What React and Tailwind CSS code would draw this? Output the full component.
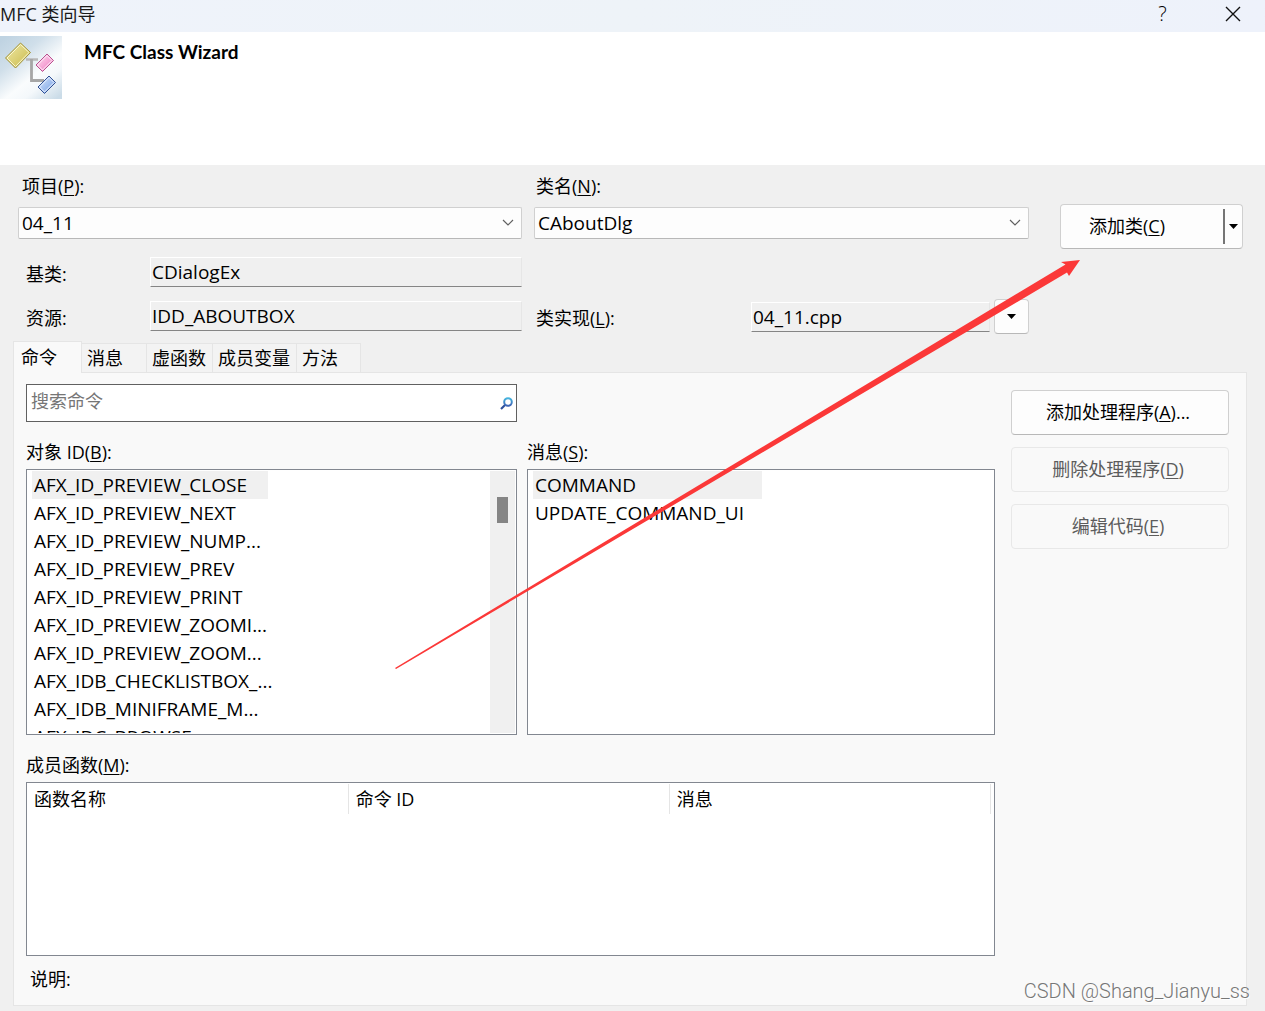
import { useState } from "react";

const tabs = [
  { name: "命令", width: "w-[69px]" },
  { name: "消息", width: "w-[65px]" },
  { name: "虚函数", width: "w-[66px]" },
  { name: "成员变量", width: "w-[84px]" },
  { name: "方法", width: "w-16" },
];

const objectIds = [
  "AFX_ID_PREVIEW_CLOSE",
  "AFX_ID_PREVIEW_NEXT",
  "AFX_ID_PREVIEW_NUMP...",
  "AFX_ID_PREVIEW_PREV",
  "AFX_ID_PREVIEW_PRINT",
  "AFX_ID_PREVIEW_ZOOMI...",
  "AFX_ID_PREVIEW_ZOOM...",
  "AFX_IDB_CHECKLISTBOX_...",
  "AFX_IDB_MINIFRAME_M...",
  "AFX_IDC_BROWSE",
];

const messages = ["COMMAND", "UPDATE_COMMAND_UI"];

const columns = ["函数名称", "命令 ID", "消息"];

function WizardIcon() {
  return (
    <svg width="62" height="63" viewBox="0 0 62 63" aria-hidden="true">
      <defs>
        <linearGradient id="bg" x1="0.1" y1="0" x2="0.9" y2="1">
          <stop offset="0" stopColor="#bfd3e2" />
          <stop offset="0.3" stopColor="#d0dfea" />
          <stop offset="0.6" stopColor="#fafcfd" />
          <stop offset="0.75" stopColor="#f4f8fb" />
          <stop offset="1" stopColor="#cbdce8" />
        </linearGradient>
        <linearGradient id="yellow" x1="0" y1="0" x2="1" y2="1">
          <stop offset="0" stopColor="#f0eaa8" />
          <stop offset="1" stopColor="#c8b848" />
        </linearGradient>
        <linearGradient id="pink" x1="0" y1="0" x2="1" y2="1">
          <stop offset="0" stopColor="#ffe3f4" />
          <stop offset="1" stopColor="#ee74bd" />
        </linearGradient>
        <linearGradient id="blue" x1="0" y1="0" x2="1" y2="1">
          <stop offset="0" stopColor="#dce9ff" />
          <stop offset="1" stopColor="#6f9be0" />
        </linearGradient>
      </defs>
      <rect width="62" height="63" fill="url(#bg)" />
      <path d="M26 23.500H38" fill="none" stroke="#b8b8b8" strokeWidth="2.500" />
      <path d="M31.500 23V44.500H44" fill="none" stroke="#a6a6a6" strokeWidth="2.800" />
      <path d="M20.500 7L30.500 16.500L15.500 32L5.500 22Z" fill="url(#yellow)" stroke="#a3943a" />
      <path d="M20.500 8.500L29 16.500L15.500 30.500L7 22Z" fill="none" stroke="#fbf8d2" />
      <path d="M47 18L53.500 24.500L42.500 35.500L36 29Z" fill="url(#pink)" stroke="#b8508f" />
      <path d="M47 19.500L52 24.500L42.500 34L37.500 29Z" fill="none" stroke="#fff0fa" />
      <path d="M49 40L55.500 46.500L44.500 57.500L38 51Z" fill="url(#blue)" stroke="#2f4f94" />
      <path d="M49 41.500L54 46.500L44.500 56L39.500 51Z" fill="none" stroke="#edf4ff" />
    </svg>
  );
}

function Chevron() {
  return (
    <svg
      className="absolute right-2 top-3 pointer-events-none"
      width="12"
      height="8"
      viewBox="0 0 12 8"
      aria-hidden="true"
    >
      <path d="M1 1L6 6L11 1" fill="none" stroke="#606060" strokeWidth="1.200" />
    </svg>
  );
}

function Caret() {
  return (
    <svg width="9" height="5" viewBox="0 0 9 5" aria-hidden="true">
      <path d="M0 0H9L4.500 5Z" fill="#000" />
    </svg>
  );
}

function SearchIcon() {
  return (
    <svg width="13" height="13" viewBox="0 0 13 13" aria-hidden="true">
      <defs>
        <linearGradient id="lens" x1="0" y1="0" x2="0" y2="1">
          <stop offset="0" stopColor="#45b4de" />
          <stop offset="1" stopColor="#3f63b5" />
        </linearGradient>
      </defs>
      <path d="M5 8L1 12" stroke="#2d4f9b" strokeWidth="2.200" />
      <circle cx="8" cy="5" r="3.800" fill="#fff" stroke="url(#lens)" strokeWidth="2" />
    </svg>
  );
}

function Key({ children }) {
  return <u className="underline-offset-2 decoration-1">{children}</u>;
}

function Combo({ id, value }) {
  return (
    <div className="relative mt-[9px]">
      <select
        id={id}
        defaultValue={value}
        className="block appearance-none w-full h-8 px-[3px] text-[19px] leading-[30px] bg-[#fdfdfd] border border-[#d0d0d0] border-b-[#b8b8b8] rounded-xs"
      >
        <option>{value}</option>
      </select>
      <Chevron />
    </div>
  );
}

function Field({ id, value }) {
  return (
    <input
      id={id}
      readOnly
      value={value}
      className="flex-1 min-w-0 h-[30px] px-px text-[19px] bg-[#f0f0f0] border border-t-white border-r-[#e6e6e6] border-l-white border-b-[#858585] outline-none"
    />
  );
}

function ListItem({ text, active, width, onClick }) {
  return (
    <li
      role="option"
      aria-selected={active}
      onClick={onClick}
      className={`${width} ml-1 pl-[2px] h-7 text-[19px] leading-7 whitespace-nowrap ${active ? "bg-[#f0f0f0]" : ""}`}
    >
      {text}
    </li>
  );
}

function ActionButton({ children, disabled }) {
  return (
    <button
      disabled={disabled}
      className="h-[45px] pr-1 pb-px rounded border bg-[#fdfdfd] border-[#d0d0d0] border-b-[#b8b8b8] disabled:bg-[#f9f9f9] disabled:border-[#e8e8e8] disabled:text-[#5c5c5c]"
    >
      {children}
    </button>
  );
}

export default function App() {
  const [tab, setTab] = useState("命令");
  const [objectId, setObjectId] = useState(objectIds[0]);
  const [message, setMessage] = useState(messages[0]);

  return (
    <div className="relative min-h-screen overflow-hidden bg-[#f0f0f0] text-black text-lg leading-6 font-['Open_Sans','Noto_Sans_CJK_SC',sans-serif]">
      {/* Title bar */}
      <header className="h-8 flex items-center justify-between bg-linear-to-r from-[#eff3fb] via-[#eef3f8] to-[#eef2fb]">
        <span className="pb-1 text-[#1a1a1a]">MFC 类向导</span>
        <div className="flex items-center pb-1">
          <button aria-label="帮助" className="w-[75px] text-xl leading-6 font-light">
            ?
          </button>
          <button aria-label="关闭" className="w-[65px] flex justify-center">
            <svg width="16" height="16" viewBox="0 0 16 16" aria-hidden="true">
              <path d="M1 1L15 15M15 1L1 15" stroke="#111" strokeWidth="1.400" />
            </svg>
          </button>
        </div>
      </header>

      {/* Banner */}
      <div className="h-[133px] pt-1 flex items-start gap-[22px] bg-white">
        <WizardIcon />
        <h1 className="pt-1 font-['Lato','Open_Sans',sans-serif] text-[19px] font-bold">
          MFC Class Wizard
        </h1>
      </div>

      {/* Class selection */}
      <div className="pt-[9px] pl-[18px] pr-[22px] flex items-start">
        <div className="flex-1 min-w-0 grid grid-cols-[minmax(0,504fr)_minmax(0,495fr)] gap-x-3">
          <div className="flex flex-col">
            <label htmlFor="project" className="pl-1">
              项目(<Key>P</Key>):
            </label>
            <Combo id="project" value="04_11" />
            <div className="mt-[18px] flex items-center">
              <label htmlFor="base" className="shrink-0 w-[132px] pl-2 pt-[3px]">
                基类:
              </label>
              <Field id="base" value="CDialogEx" />
            </div>
            <div className="mt-[14px] flex items-center">
              <label htmlFor="resource" className="shrink-0 w-[132px] pl-2 pt-[3px]">
                资源:
              </label>
              <Field id="resource" value="IDD_ABOUTBOX" />
            </div>
          </div>
          <div className="flex flex-col">
            <label htmlFor="class" className="pl-[2px]">
              类名(<Key>N</Key>):
            </label>
            <Combo id="class" value="CAboutDlg" />
            <div className="mt-[60px] flex items-center">
              <label htmlFor="impl" className="shrink-0 w-[217px] pl-[2px] pt-[3px]">
                类实现(<Key>L</Key>):
              </label>
              <Field id="impl" value="04_11.cpp" />
              <button
                aria-label="类实现文件"
                className="shrink-0 ml-1 w-[35px] h-[35px] flex items-center justify-center rounded border bg-[#fdfdfd] border-[#d0d0d0] border-b-[#b8b8b8]"
              >
                <Caret />
              </button>
            </div>
          </div>
        </div>
        <div className="mt-[30px] ml-[31px] w-[183px] h-[45px] flex items-center rounded border bg-[#fdfdfd] border-[#d0d0d0] border-b-[#b8b8b8]">
          <button className="flex-1 h-full pl-7 pb-px text-left">
            添加类(<Key>C</Key>)
          </button>
          <button
            aria-label="添加类选项"
            className="w-[19px] h-[35px] flex items-center justify-center border-l-2 border-[#757575]"
          >
            <Caret />
          </button>
        </div>
      </div>

      {/* Tabs */}
      <div role="tablist" className="mt-[7px] ml-[13px] h-[31px] flex items-end">
        {tabs.map((t) => (
          <button
            key={t.name}
            role="tab"
            aria-selected={tab === t.name}
            onClick={() => setTab(t.name)}
            className={`${t.width} shrink-0 text-left whitespace-nowrap border-[#e5e5e5] ${
              tab === t.name
                ? "relative -mb-px h-8 pl-[7px] pb-px border border-b-0 bg-[#f9f9f9]"
                : "h-[29px] pl-[5px] border-t border-r bg-[#f3f3f3]"
            }`}
          >
            {t.name}
          </button>
        ))}
      </div>

      <main className="ml-[13px] mr-[18px] pt-[11px] pb-[14px] pl-3 pr-[17px] flex items-start gap-4 border border-[#e5e5e5] bg-[#f9f9f9]">
        <div className="flex-1 min-w-0">
          <div className="grid grid-cols-[minmax(0,491fr)_minmax(0,468fr)] gap-x-[10px]">
            <div className="h-[38px] pr-[3px] flex items-center bg-white border border-[#606060]">
              <input
                aria-label="搜索命令"
                placeholder="搜索命令"
                className="flex-1 min-w-0 h-full pl-1 pb-1 outline-none placeholder:text-[#767676]"
              />
              <SearchIcon />
            </div>
            <div />

            <div id="ids-label" className="mt-[18px]">
              对象 ID(<Key>B</Key>):
            </div>
            <div id="messages-label" className="mt-[18px]">
              消息(<Key>S</Key>):
            </div>

            <div className="mt-[5px] h-[266px] p-px flex overflow-hidden bg-white border border-[#828790]">
              <ul role="listbox" aria-labelledby="ids-label" className="flex-1 overflow-hidden">
                {objectIds.map((id) => (
                  <ListItem
                    key={id}
                    text={id}
                    width="w-[236px]"
                    active={id === objectId}
                    onClick={() => setObjectId(id)}
                  />
                ))}
              </ul>
              {/* Scrollbar */}
              <div className="w-[25px] pt-[26px] bg-[#f0f0f0]">
                <div className="ml-[7px] w-[11px] h-[26px] bg-[#858585]" />
              </div>
            </div>
            <ul
              role="listbox"
              aria-labelledby="messages-label"
              className="mt-[5px] h-[266px] p-px bg-white border border-[#828790]"
            >
              {messages.map((m) => (
                <ListItem
                  key={m}
                  text={m}
                  width="w-[229px]"
                  active={m === message}
                  onClick={() => setMessage(m)}
                />
              ))}
            </ul>
          </div>

          <div id="members-label" className="mt-[18px]">
            成员函数(<Key>M</Key>):
          </div>
          <div className="mt-[5px] h-[174px] pt-px pr-[3px] bg-white border border-[#828790]">
            <table aria-labelledby="members-label" className="w-full table-fixed">
              <thead>
                <tr className="h-[30px]">
                  {columns.map((c) => (
                    <th
                      key={c}
                      className="pl-[7px] py-0 text-left font-normal border-r border-[#e5e5e5]"
                    >
                      {c}
                    </th>
                  ))}
                </tr>
              </thead>
            </table>
          </div>
          <p className="mt-[11px] pl-1">说明:</p>
        </div>

        <div className="w-[218px] pt-[6px] flex flex-col gap-3">
          <ActionButton>
            添加处理程序(<Key>A</Key>)...
          </ActionButton>
          <ActionButton disabled>
            删除处理程序(<Key>D</Key>)
          </ActionButton>
          <ActionButton disabled>
            编辑代码(<Key>E</Key>)
          </ActionButton>
        </div>
      </main>

      {/* Arrow pointing at the add class button */}
      <svg
        className="absolute top-[260px] left-[395px] pointer-events-none"
        width="686"
        height="410"
        viewBox="395 260 686 410"
        aria-hidden="true"
      >
        <path
          d="M395 668L1065.500 264.500L1061 262L1080 260L1069 276L1067 272.500L396 669Z"
          fill="#fb3838"
        />
      </svg>

      <span className="absolute right-[15px] bottom-2 text-xl leading-6 font-light text-[#777777] font-['Roboto',sans-serif] text-shadow-[1px_1px_0_#ffffff]">
        CSDN @Shang_Jianyu_ss
      </span>
    </div>
  );
}
